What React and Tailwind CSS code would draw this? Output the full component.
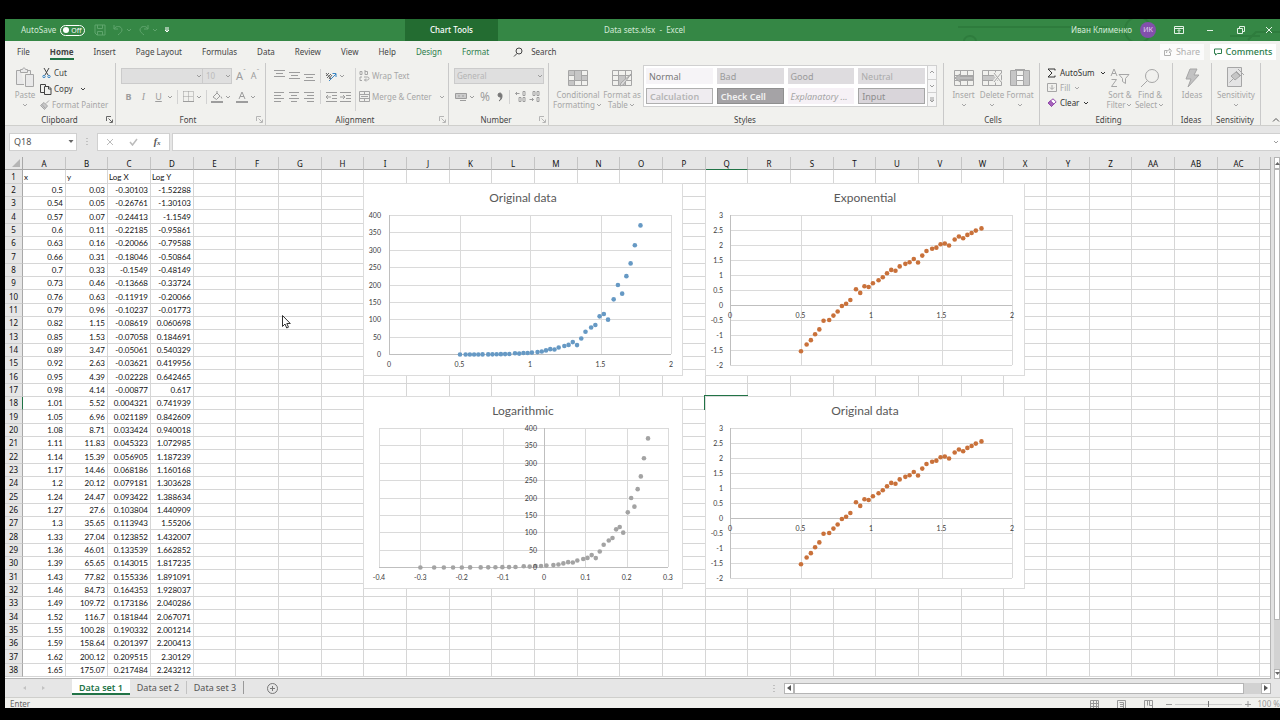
import React from 'react';

// Sheet data: x, y, log x, log y
const DATA = [
  ['0.5', '0.03', '-0.30103', '-1.52288'],
  ['0.54', '0.05', '-0.26761', '-1.30103'],
  ['0.57', '0.07', '-0.24413', '-1.1549'],
  ['0.6', '0.11', '-0.22185', '-0.95861'],
  ['0.63', '0.16', '-0.20066', '-0.79588'],
  ['0.66', '0.31', '-0.18046', '-0.50864'],
  ['0.7', '0.33', '-0.1549', '-0.48149'],
  ['0.73', '0.46', '-0.13668', '-0.33724'],
  ['0.76', '0.63', '-0.11919', '-0.20066'],
  ['0.79', '0.96', '-0.10237', '-0.01773'],
  ['0.82', '1.15', '-0.08619', '0.060698'],
  ['0.85', '1.53', '-0.07058', '0.184691'],
  ['0.89', '3.47', '-0.05061', '0.540329'],
  ['0.92', '2.63', '-0.03621', '0.419956'],
  ['0.95', '4.39', '-0.02228', '0.642465'],
  ['0.98', '4.14', '-0.00877', '0.617'],
  ['1.01', '5.52', '0.004321', '0.741939'],
  ['1.05', '6.96', '0.021189', '0.842609'],
  ['1.08', '8.71', '0.033424', '0.940018'],
  ['1.11', '11.83', '0.045323', '1.072985'],
  ['1.14', '15.39', '0.056905', '1.187239'],
  ['1.17', '14.46', '0.068186', '1.160168'],
  ['1.2', '20.12', '0.079181', '1.303628'],
  ['1.24', '24.47', '0.093422', '1.388634'],
  ['1.27', '27.6', '0.103804', '1.440909'],
  ['1.3', '35.65', '0.113943', '1.55206'],
  ['1.33', '27.04', '0.123852', '1.432007'],
  ['1.36', '46.01', '0.133539', '1.662852'],
  ['1.39', '65.65', '0.143015', '1.817235'],
  ['1.43', '77.82', '0.155336', '1.891091'],
  ['1.46', '84.73', '0.164353', '1.928037'],
  ['1.49', '109.72', '0.173186', '2.040286'],
  ['1.52', '116.7', '0.181844', '2.067071'],
  ['1.55', '100.28', '0.190332', '2.001214'],
  ['1.59', '158.64', '0.201397', '2.200413'],
  ['1.62', '200.12', '0.209515', '2.30129'],
  ['1.65', '175.07', '0.217484', '2.243212'],
  ['1.68', '225.4', '0.225309', '2.352954'],
  ['1.71', '262.1', '0.232996', '2.418467'],
  ['1.74', '314.2', '0.240549', '2.497206'],
  ['1.78', '371.5', '0.25042', '2.569959'],
];

const SHEET = [['x', 'y', 'Log X', 'Log Y'], ...DATA.slice(0, 37)];
const COLS = [...'ABCDEFGHIJKLMNOPQRSTUVWXYZ', 'AA', 'AB', 'AC'];

const series = (xi, yi) => DATA.map((r) => [Number(r[xi]), Number(r[yi])]);

const RAW = { x: [0, 2, 0.5], y: [0, 400, 50] };
const LOGY = { x: [0, 2, 0.5], y: [-2, 3, 0.5] };

const CHARTS = [
  { id: 'c1', place: 'left-[358px] top-[26px]', title: 'Original data', color: '#6699c4', points: series(0, 1), axes: RAW, box: [25, 31, 307, 170], labelX: 17, yAxis: 0 },
  { id: 'c2', place: 'left-[700px] top-[26px]', title: 'Exponential', color: '#c9713a', points: series(0, 3), axes: LOGY, box: [24, 31, 306, 181], labelX: 17, yAxis: 0 },
  { id: 'c3', place: 'left-[358px] top-[239px]', title: 'Logarithmic', color: '#a3a3a3', points: series(2, 1), axes: { x: [-0.4, 0.3, 0.1], y: [0, 400, 50] }, box: [15, 31, 304, 170], labelX: 173, yAxis: 0 },
  { id: 'c4', place: 'left-[700px] top-[239px]', title: 'Original data', color: '#c9713a', points: series(0, 3), axes: LOGY, box: [24, 31, 306, 181], labelX: 17, yAxis: 0 },
];

function ticks([min, max, step]) {
  const n = Math.round((max - min) / step);
  return Array.from({ length: n + 1 }, (_, i) => Number((min + i * step).toFixed(2)));
}

function Chart({ place, title, color, points, axes, box, labelX, yAxis }) {
  const [l, t, r, b] = box;
  const [x0, x1] = axes.x;
  const [y0, y1] = axes.y;
  const px = (v) => l + ((v - x0) / (x1 - x0)) * (r - l);
  const py = (v) => b - ((v - y0) / (y1 - y0)) * (b - t);
  const snap = (v) => Math.round(v) + 0.5;
  return (
    <figure className={`absolute ${place} m-0 border border-[#dcdcdc] bg-white font-['Lato','Open_Sans',sans-serif]`}>
      <svg width="318" height="191" className="block" role="img" aria-label={title}>
        <text x="159" y="18" fontSize="12" fill="#595959" textAnchor="middle">{title}</text>
        {ticks(axes.y).map((v) => (
          <line key={v} x1={l} x2={r} y1={snap(py(v))} y2={snap(py(v))} stroke={v === 0 ? '#bfbfbf' : '#dadada'} />
        ))}
        {ticks(axes.x).map((v) => (
          <line key={v} x1={snap(px(v))} x2={snap(px(v))} y1={t} y2={b} stroke={v === 0 ? '#bfbfbf' : '#dadada'} />
        ))}
        {points.map(([x, y]) => (
          <circle key={x} cx={px(x) + 0.5} cy={py(y) + 0.5} r="2.3" fill={color} />
        ))}
        {ticks(axes.y).map((v) => (
          <text key={v} x={labelX} y={py(v) + 3} fontSize="7" fill="#3a3a3a" textAnchor="end">{v}</text>
        ))}
        {ticks(axes.x).map((v) => (
          <text key={v} x={px(v)} y={py(yAxis) + 13} fontSize="7" fill="#3a3a3a" textAnchor="middle">{v}</text>
        ))}
      </svg>
    </figure>
  );
}

// Stroke icon drawn on its own w x h pixel box
function Icon({ w = 12, h = 12, children, className = '' }) {
  return (
    <svg width={w} height={h} viewBox={`0 0 ${w} ${h}`} fill="none" stroke="currentColor" className={`shrink-0 ${className}`} aria-hidden="true">
      {children}
    </svg>
  );
}

const Chevron = ({ className = '' }) => (
  <Icon w={8} h={6} className={className}><path d="M2 2l2 2 2-2" /></Icon>
);

const Sep = () => <span className="mx-[3px] h-[14px] w-px shrink-0 bg-[#d2d2d2]" />;

function Tool({ label, className = 'w-[14px]', children }) {
  return (
    <button type="button" aria-label={label} className={`flex shrink-0 items-center justify-center ${className}`}>
      {children}
    </button>
  );
}

const Drop = ({ label }) => <Tool label={label} className="w-2"><Chevron /></Tool>;

function BigTool({ icon, lines, drop = false, className = '' }) {
  return (
    <button type="button" className={`flex flex-col items-center text-[#a6a6a6] ${className}`}>
      <span className="flex h-[25px] items-center justify-center">{icon}</span>
      {lines.map((line, i) => (
        <span key={line} className="flex items-center whitespace-nowrap text-[8px] leading-[10px]">
          {line}
          {drop && i === 1 && <Chevron />}
        </span>
      ))}
      {drop && lines.length === 1 && <Chevron className="mt-[2px]" />}
    </button>
  );
}

const Launcher = ({ dim }) => (
  <Tool label="More options" className={`w-2 ${dim ? 'text-[#b5b5b5]' : 'text-[#666]'}`}>
    <Icon w={7} h={7}><path d="M.5 5V.5H5M2.5 2.5l3.500 3.500M6.500 3.500v3h-3" /></Icon>
  </Tool>
);

function Group({ name, launcher, dim, className = '', children }) {
  return (
    <section aria-label={name} className={`flex h-[62px] shrink-0 flex-col border-r border-[#c9c9c9] ${className}`}>
      <div className="flex h-[51px] shrink-0 pt-[2px]">{children}</div>
      <div className="flex h-[11px] shrink-0 items-center pr-[2px] text-[8px] leading-[11px] text-[#444]">
        <span className="flex-1 text-center">{name}</span>
        {launcher && <Launcher dim={dim} />}
      </div>
    </section>
  );
}

function TitleBar() {
  return (
    <header className="relative grid h-[22px] shrink-0 grid-cols-[1fr_auto_1fr] bg-[#358745] text-[8px] text-[#d4ead8]">
      <svg className="absolute right-0 top-0" width="330" height="22" fill="none" stroke="#2e7c3d" strokeWidth="2" aria-hidden="true">
        <path d="M8 8h150M14 22a6 5 0 0 1 12 0M280 17h30M298 21l8-8h24" />
        <circle cx="188" cy="11" r="13" />
      </svg>
      <div className="flex">
        <div className="flex w-[400px] items-center pl-4">
          <span id="autosave">AutoSave</span>
          <button type="button" role="switch" aria-checked="false" aria-labelledby="autosave" className="ml-1 flex h-[11px] w-[25px] items-center gap-[2px] rounded-full border border-white pl-[2px] text-[7px] leading-none text-white">
            <span className="size-[6px] shrink-0 rounded-full bg-white" />
            Off
          </button>
          <div className="ml-2 flex items-center gap-1 text-[#5fa56d]">
            <Tool label="Save">
              <Icon w={12} h={12}><path d="M1 1h10v10H3l-2-2zM3.500 1v3.500h5V1M3.500 11V7.500h5V11" /></Icon>
            </Tool>
            <div className="flex">
              <Tool label="Undo"><Icon><path d="M2 1v4h4M2 5c2-4 8-3 8 1 0 2-2 3-4 5" /></Icon></Tool>
              <Drop label="Undo list" />
            </div>
            <div className="flex">
              <Tool label="Redo"><Icon><path d="M10 1v4H6M10 5c-2-4-8-3-8 1 0 2 2 3 4 5" /></Icon></Tool>
              <Drop label="Redo list" />
            </div>
            <Tool label="Customize toolbar" className="w-2 text-white"><Icon w={6} h={6}><path d="M1 1h4M1 3l2 2 2-2z" /></Icon></Tool>
          </div>
        </div>
        <div className="flex w-[93px] items-center justify-center bg-[#236c31] font-medium text-white">Chart Tools</div>
      </div>
      <h1 className="self-center whitespace-pre pl-1">Data sets.xlsx  -  Excel</h1>
      <div className="relative flex items-center justify-end pr-[7px]">
        <span>Иван Клименко</span>
        <span className="ml-2 flex size-4 items-center justify-center rounded-full bg-[#8250ac] text-[7px] text-[#e6d9f2]">ИК</span>
        <div className="ml-4 flex gap-[17px] text-[#e3f2e6]">
          <Tool label="Ribbon display options"><Icon w={10} h={8}><path d="M.5.5h9v7h-9zM.5 2.500h9M5 7V4M3.500 5L5 3.500 6.500 5" /></Icon></Tool>
          <Tool label="Minimize"><Icon w={8} h={8}><path d="M1 4.500h6" /></Icon></Tool>
          <Tool label="Restore"><Icon w={8} h={8}><path d="M.5 2.500h5v5h-5zM2.500 2.500v-2h5v5h-2" /></Icon></Tool>
          <Tool label="Close" className="w-[8px]"><Icon w={8} h={8}><path d="M1 1l6 6M7 1L1 7" /></Icon></Tool>
        </div>
      </div>
    </header>
  );
}

const TABS = ['File', 'Home', 'Insert', 'Page Layout', 'Formulas', 'Data', 'Review', 'View', 'Help', 'Design', 'Format'];

function Tabs() {
  return (
    <nav className="flex h-[22px] shrink-0 items-center bg-[#f1f1ee] pl-3 text-[8px] text-[#444]">
      <div className="flex flex-1 items-center gap-5">
        {TABS.map((tab) => (
          <button
            key={tab}
            type="button"
            className={
              tab === 'Home'
                ? 'border-b-2 border-[#217346] pt-[2px] font-bold'
                : tab === 'Design' || tab === 'Format'
                  ? 'text-[#2d7d4c]'
                  : ''
            }
          >
            {tab}
          </button>
        ))}
        <label className="ml-1 flex items-center gap-2">
          <Icon w={10} h={10}><circle cx="6" cy="4" r="3" /><path d="M4 6.500L1 9.500" /></Icon>
          <input type="text" placeholder="Search" className="w-20 bg-transparent outline-none placeholder:text-[#444]" />
        </label>
      </div>
      <button type="button" className="flex h-4 w-11 items-center justify-center gap-1 bg-[#fbfbfb] text-[9px] text-[#b0b0b0]">
        <Icon w={8} h={8}><path d="M3 2.500H.5v5h6V5M2.500 5c0-2 1-3 3-3V.500L7.500 3 5.500 5V3.500" /></Icon>
        Share
      </button>
      <button type="button" className="ml-[6px] mr-1 flex h-4 w-[66px] items-center justify-center gap-1 bg-white text-[9px] font-medium text-[#2d7d4c]">
        <Icon w={8} h={8}><path d="M.5 1h7v4.500H3.500L1.500 7V5.500h-1z" /></Icon>
        Comments
      </button>
    </nav>
  );
}

const GALLERY = [
  ['Normal', 'bg-[#f6f4f7] text-[#777]'],
  ['Bad', 'bg-[#dedcdf] text-[#9a9a9a]'],
  ['Good', 'bg-[#dedcdf] text-[#9a9a9a]'],
  ['Neutral', 'bg-[#dedcdf] text-[#ababab]'],
  ['Calculation', 'border border-[#b0b0b0] bg-[#efecf0] font-semibold text-[#b5b5b5]'],
  ['Check Cell', 'border border-[#8f8f8f] bg-[#a5a3a6] font-semibold text-[#f1f1f1]'],
  ['Explanatory ...', 'bg-[#f6f1f6] italic text-[#a5a5a5]'],
  ['Input', 'border border-[#a5a5a5] bg-[#d9d5da] text-[#8d8d8d]'],
];

const Lines = ({ rows, y = 0 }) => (
  <Icon w={11} h={14}>
    {rows.map(([a, b], i) => <path key={i} d={`M${a} ${y + 1.5 + i * 3}H${b}`} />)}
  </Icon>
);

const TableGlyph = ({ children }) => (
  <Icon w={20} h={18}>
    <path d="M.5 1.500h19v15H.5zM.5 6.500h19M.5 11.500h19M6.500 1.500v15M13.500 1.500v15" />
    {children}
  </Icon>
);

function Ribbon() {
  return (
    <div className="flex h-[63px] shrink-0 border-b border-[#cfcfcc] bg-[#f1f1ee] text-[8px] text-[#9d9d9d]">
      <Group name="Clipboard" launcher className="w-[111px] pl-[9px]">
        <BigTool
          className="w-[22px]"
          lines={['Paste']}
          drop
          icon={<Icon w={20} h={21}><path d="M6 3.500H1.500v14H9M12 3.500h3.500V7M5.500 5.500v-3h2c0-2 3-2 3 0h2v3zM10.500 7.500h8v12h-8z" fill="#e9e9e9" /></Icon>}
        />
        <div className="ml-1 flex flex-col text-[#444]">
          <button type="button" className="flex h-4 items-center gap-[3px] pl-[2px]">
            <Icon w={9} h={10}><path d="M2 0l4 7M7 0L3 7" /><circle cx="2" cy="8.500" r="1.200" stroke="#3b86c4" /><circle cx="7" cy="8.500" r="1.200" stroke="#3b86c4" /></Icon>
            Cut
          </button>
          <button type="button" className="flex h-4 items-center gap-[2px]">
            <Icon w={12} h={11}><path d="M4 8.500H.5v-8h5V2M4.500 2.500H9l2 2v6H4.500zM8.500 2.500v2.500H11" /></Icon>
            Copy
            <Chevron className="ml-1" />
          </button>
          <button type="button" className="flex h-4 items-center gap-[2px] whitespace-nowrap text-[#a6a6a6]">
            <Icon w={10} h={10}><path d="M9 .5L6 3.500M4 2.500l3.500 3.500-3 3.500L.5 5.500zM2 4.500l3 3.500" fill="#c9c9c9" /></Icon>
            Format Painter
          </button>
        </div>
      </Group>

      <Group name="Font" launcher dim className="w-[150px] pl-[5px]">
        <div className="flex flex-col">
          <div className="flex h-[21px] items-center">
            <div className="relative">
              <select aria-label="Font" className="block h-4 w-[82px] appearance-none border border-[#cbcbcb] bg-[#dfdfdf]"><option> </option></select>
              <Chevron className="pointer-events-none absolute right-0 top-[5px]" />
            </div>
            <div className="relative">
              <select aria-label="Font size" defaultValue="10" className="block h-4 w-[29px] appearance-none border border-l-0 border-[#cbcbcb] bg-[#dfdfdf] pl-[3px] text-[#bbb]"><option>10</option></select>
              <Chevron className="pointer-events-none absolute right-0 top-[5px]" />
            </div>
            <Tool label="Increase font size" className="ml-[2px] w-[14px] text-[11px] leading-none">A<sup className="text-[7px]">ˆ</sup></Tool>
            <Tool label="Decrease font size" className="w-[14px] text-[9px] leading-none">A<sup className="text-[7px]">ˇ</sup></Tool>
          </div>
          <div className="flex h-[21px] items-center">
            <Tool label="Bold" className="w-[15px] text-[9px] font-bold">B</Tool>
            <Tool label="Italic" className="w-[15px] font-['Liberation_Serif',serif] text-[10px] italic">I</Tool>
            <Tool label="Underline" className="w-[15px] text-[9px] underline">U</Tool>
            <Drop label="Underline style" />
            <Sep />
            <Tool label="Borders"><Icon w={11} h={11}><path d="M0 10.500h11" /><path strokeDasharray="1 1" d="M.5.500h10v9M.5.500v9M5.500.500v9M.5 5.500h10" /></Icon></Tool>
            <Drop label="Border styles" />
            <Sep />
            <Tool label="Fill color"><Icon w={12} h={12}><path d="M2 6l4-4 3 3-3.500 3.500zM6 2V0M10 5.500l.8 2" /><path strokeWidth="2" d="M0 11h12" /></Icon></Tool>
            <Drop label="Fill colors" />
            <Tool label="Font color" className="ml-[3px] w-[14px]"><Icon w={12} h={12}><path d="M3 8L6 1l3 7M4 5.500h4" /><path strokeWidth="2" d="M0 11h12" /></Icon></Tool>
            <Drop label="Font colors" />
          </div>
        </div>
      </Group>

      <Group name="Alignment" launcher dim className="w-[183px] pl-[6px]">
        <div className="flex">
          <div className="flex flex-col">
            <div className="flex h-[21px] items-center">
              <Tool label="Top align" className="w-[15px]"><Lines rows={[[0, 11], [2, 9], [0, 11]]} /></Tool>
              <Tool label="Middle align" className="w-[15px]"><Lines y={2} rows={[[0, 11], [2, 9], [0, 11]]} /></Tool>
              <Tool label="Bottom align" className="w-[15px]"><Lines y={4} rows={[[0, 11], [2, 9], [0, 11]]} /></Tool>
              <Sep />
              <Tool label="Orientation"><Icon w={12} h={12}><path d="M1 6l3-3M2 8l4-4M4 9l3-4M1 3l5 6" stroke="#666" /><path stroke="#3b86c4" d="M4 11l7-7M7.500 3.500H11V7" /></Icon></Tool>
              <Drop label="Orientations" />
            </div>
            <div className="flex h-[21px] items-center">
              <Tool label="Align left" className="w-[15px]"><Lines y={1} rows={[[0, 10], [0, 7], [0, 10], [0, 7]]} /></Tool>
              <Tool label="Center" className="w-[15px]"><Lines y={1} rows={[[0, 10], [2, 8], [0, 10], [2, 8]]} /></Tool>
              <Tool label="Align right" className="w-[15px]"><Lines y={1} rows={[[0, 10], [3, 10], [0, 10], [3, 10]]} /></Tool>
              <Sep />
              <Tool label="Decrease indent"><Icon w={11} h={10}><path d="M0 .5h11M6 3.500h5M6 6.500h5M0 9.500h11M5 5H0M2 3L0 5l2 2" /></Icon></Tool>
              <Tool label="Increase indent"><Icon w={11} h={10}><path d="M0 .5h11M6 3.500h5M6 6.500h5M0 9.500h11M0 5h5M3 3l2 2-2 2" /></Icon></Tool>
            </div>
          </div>
          <span className="mx-[3px] my-[3px] w-px bg-[#d2d2d2]" />
          <div className="flex flex-col whitespace-nowrap text-[#a6a6a6]">
            <button type="button" className="flex h-[21px] items-center gap-[2px]">
              <Icon w={11} h={12}><path d="M1 1.500h2v3H1zM6 0v4.500h2.500v-3H6M3 7H1v3.500h2M5 7h3.500c2 0 2 3 0 3H5.500M7 8.500L5.500 10 7 11.500" /></Icon>
              Wrap Text
            </button>
            <button type="button" className="flex h-[21px] items-center gap-[2px]">
              <Icon w={11} h={11}><path d="M.5.500h10v10H.5zM.5 3.500h10M.5 7.500h10M5.500.500v3M5.500 7.500v3M2 5.500h7" /></Icon>
              Merge &amp; Center
              <Chevron className="ml-1" />
            </button>
          </div>
        </div>
      </Group>

      <Group name="Number" launcher dim className="w-[100px] pl-[5px]">
        <div className="flex flex-col">
          <div className="flex h-[21px] items-center">
            <div className="relative">
              <select aria-label="Number format" className="block h-4 w-[90px] appearance-none border border-[#cbcbcb] bg-[#dfdfdf] pl-[2px] text-[#b5b5b5]"><option>General</option></select>
              <Chevron className="pointer-events-none absolute right-0 top-[5px]" />
            </div>
          </div>
          <div className="flex h-[21px] items-center">
            <Tool label="Accounting format"><Icon w={12} h={10}><path d="M.5 1.500h11v5H.5zM3 4h2M7 4h2M5 8.500h6" fill="#ccc" /></Icon></Tool>
            <Drop label="Currencies" />
            <Tool label="Percent style" className="w-[18px] text-[12px] leading-none">%</Tool>
            <Tool label="Comma style" className="w-[12px] font-bold text-[#777]"><Icon w={6} h={10}><path fill="currentColor" d="M3 1a1.500 1.500 0 1 0 0 4h1c0 2-1 3-2 4 2-1 3-3 3-5S4 1 3 1z" /></Icon></Tool>
            <Sep />
            <Tool label="Increase decimal"><Icon w={11} h={11}><path d="M4.500 2.500H.5M2 1L.5 2.500 2 4M8 .500h2v4H8zM4 6.500h2v4H4zM8 6.500h2v4H8z" /></Icon></Tool>
            <Tool label="Decrease decimal"><Icon w={11} h={11}><path d="M.5 8.500h4M3 7l1.500 1.500L3 10M4 .500h2v4H4zM8 .500h2v4H8zM8 6.500h2v4H8z" /></Icon></Tool>
          </div>
        </div>
      </Group>

      <Group name="Styles" className="min-w-[300px] flex-1 pl-[6px] pr-[6px]">
        <BigTool className="w-[46px]" drop lines={['Conditional', 'Formatting']} icon={<TableGlyph><path fill="#c6c6c6" stroke="none" d="M1 2h5v4H1zM7 2h6v9H7zM1 12h5v4H1zM14 7h5v4h-5z" /></TableGlyph>} />
        <BigTool className="w-[42px]" drop lines={['Format as', 'Table']} icon={<TableGlyph><path fill="#c6c6c6" stroke="none" d="M7 7h6v9H7z" /><path d="M19 5L11 16l-3 1 1-3z" fill="#ddd" /></TableGlyph>} />
        <div className="flex h-[42px] min-w-0 flex-1 border border-[#d0d0d0] bg-white">
          <div className="grid flex-1 grid-cols-4 grid-rows-2 gap-1 p-[2px]">
            {GALLERY.map(([name, look]) => (
              <button key={name} type="button" className={`flex items-center overflow-hidden whitespace-nowrap px-[3px] text-left text-[9px] leading-none ${look}`}>
                {name}
              </button>
            ))}
          </div>
          <div className="flex w-[9px] flex-col divide-y divide-[#d0d0d0] border-l border-[#d0d0d0] bg-[#f6f6f6]">
            <Tool label="Previous styles" className="flex-1"><Chevron className="rotate-180" /></Tool>
            <Tool label="Next styles" className="flex-1"><Chevron /></Tool>
            <Tool label="All styles" className="flex-1"><Icon w={6} h={6}><path d="M1 1h4M1 3l2 2 2-2z" /></Icon></Tool>
          </div>
        </div>
      </Group>

      <Group name="Cells" className="w-[96px] pl-[5px]">
        <BigTool className="w-[29px]" drop lines={['Insert']} icon={<TableGlyph><path fill="#bbb" d="M1 9l5-4v2.500h13v3H6V13z" /></TableGlyph>} />
        <BigTool className="w-[28px]" drop lines={['Delete']} icon={<TableGlyph><path fill="#c6c6c6" stroke="none" d="M1 7h12v4H1z" /><path stroke="#f1f1ee" strokeWidth="3" d="M12 4l7 9M19 4l-7 9" /><path d="M12 4l7 9M19 4l-7 9" /></TableGlyph>} />
        <BigTool className="w-[28px]" drop lines={['Format']} icon={<TableGlyph><path fill="#c6c6c6" stroke="none" d="M1 2h5v14H1zM14 2h5v14h-5z" /><path d="M5 .5h10" /><path fill="#fff" d="M6.500 6.500h7v5h-7z" /></TableGlyph>} />
      </Group>

      <Group name="Editing" className="w-[133px] pl-[7px]">
        <div className="flex w-[58px] flex-col text-[#333]">
          <button type="button" className="flex h-[15px] items-center gap-1">
            <Icon w={9} h={10}><path d="M8 2.500V1H1l4 4-4 4h7V7.500" /></Icon>
            <span className="flex-1 text-left">AutoSum</span>
            <Chevron />
          </button>
          <button type="button" className="flex h-[15px] items-center gap-[3px] text-[#a6a6a6]">
            <Icon w={10} h={9}><path d="M.5.500h9v8h-9zM5 2v4M3 4.500L5 6.500l2-2" /></Icon>
            <span>Fill</span>
            <Chevron />
          </button>
          <button type="button" className="flex h-[15px] items-center gap-[3px]">
            <Icon w={10} h={9}><path d="M6 .8l3.200 3-4.700 4.500L1 5z" fill="#fff" stroke="#8f45a8" /><path d="M3.500 2.800l3.300 3.300-2.300 2.200L1 5z" fill="#a865bd" stroke="#8f45a8" /></Icon>
            <span>Clear</span>
            <Chevron />
          </button>
        </div>
        <BigTool
          className="w-[30px]"
          drop
          lines={['Sort &', 'Filter']}
          icon={<Icon w={20} h={20}><path d="M1 8l3-7 3 7M2 5.500h4M1.500 11.500h5l-5 7h5.500M9 6.500h10l-3.500 4v5l-3-2v-3z" /></Icon>}
        />
        <BigTool
          className="w-[30px]"
          drop
          lines={['Find &', 'Select']}
          icon={<Icon w={20} h={20}><circle cx="12" cy="8" r="6.500" /><path d="M7.500 12.500L1 19" /></Icon>}
        />
      </Group>

      <Group name="Ideas" className="w-[39px]">
        <BigTool className="w-full" lines={['Ideas']} icon={<Icon w={16} h={20}><path fill="#c2c2c2" d="M6 1h7l-3 6h5L4 19l3-8H2z" /></Icon>} />
      </Group>

      <Group name="Sensitivity" className="w-[49px]">
        <BigTool className="w-full" drop lines={['Sensitivity']} icon={<Icon w={20} h={21}><path d="M1.500.500h14v19h-14z" fill="#e4e4e4" /><path fill="#c6c6c6" d="M5 9l5-4 4 4-5 4zM3.500 15.500l4-4M12 2l6 6M10 4l6 6" /></Icon>} />
      </Group>

      <button type="button" aria-label="Collapse the ribbon" className="flex w-[19px] shrink-0 items-end justify-end pb-[2px] text-[#555]"><Icon w={8} h={6}><path d="M1 4.500l3-3 3 3" /></Icon></button>
    </div>
  );
}

function FormulaBar() {
  return (
    <div className="flex h-[31px] shrink-0 items-center bg-[#e6e6e6] pl-1 text-[#9d9d9d]">
      <div className="flex h-[18px] w-[68px] items-center border border-[#d0d0d0] bg-white pr-[2px]">
        <input type="text" aria-label="Name box" defaultValue="Q18" className="w-full min-w-0 bg-transparent pl-1 text-[9px] text-[#555] outline-none" />
        <Icon w={6} h={5}><path fill="#666" stroke="none" d="M.500 1h5L3 4z" /></Icon>
      </div>
      <Icon w={4} h={9} className="mx-2"><path strokeDasharray="1 2" d="M2 1v8" /></Icon>
      <div className="flex h-[18px] w-[73px] items-center justify-around border border-[#d0d0d0] bg-white">
        <Tool label="Cancel"><Icon w={8} h={8} className="text-[#bbb]"><path d="M1 1l6 6M7 1L1 7" /></Icon></Tool>
        <Tool label="Enter"><Icon w={9} h={8} className="text-[#bbb]"><path d="M1 4l2.500 3L8 1" strokeWidth="1.500" /></Icon></Tool>
        <Tool label="Insert function" className="w-[14px] font-['Liberation_Serif',serif] text-[10px] font-bold italic text-[#555]">f<sub className="text-[7px]">x</sub></Tool>
      </div>
      <div className="ml-[2px] flex h-[18px] flex-1 items-center border border-r-0 border-[#d0d0d0] bg-white">
        <input type="text" aria-label="Formula bar" className="w-full min-w-0 flex-1 bg-transparent px-1 text-[9px] outline-none" />
        <Chevron />
      </div>
    </div>
  );
}

function Grid() {
  return (
    <table className="w-full table-fixed border-separate border-spacing-0 font-['Lato','Open_Sans',sans-serif] text-[8px] leading-[10px] text-[#111]">
      <colgroup>
        <col className="w-[18px]" />
        {COLS.map((c, i) => <col key={c} className={i % 3 === 1 ? 'w-[42px]' : 'w-[43px]'} />)}
        <col />
      </colgroup>
      <thead>
        <tr className="h-[13px] bg-[#e6e6e6] font-['Noto_Sans',sans-serif]">
          <th className="border-b border-r border-[#a8a8a8] p-0">
            <svg width="8" height="8" className="ml-auto mr-[2px] block" aria-hidden="true"><path d="M8 0v8H0z" fill="#b5b5b5" /></svg>
          </th>
          {COLS.map((c) => (
            <th
              key={c}
              scope="col"
              className={`border-b border-r border-r-[#c4c4c4] p-0 pt-px font-normal ${c === 'Q' ? 'border-b-[#217346]' : 'border-b-[#a8a8a8]'}`}
            >
              {c}
            </th>
          ))}
          <th className="border-b border-[#a8a8a8] p-0" />
        </tr>
      </thead>
      <tbody>
        {SHEET.map((row, r) => (
          <tr key={r} className={r % 3 === 0 ? 'h-[14px]' : 'h-[13px]'}>
            <th scope="row" className={`border-b border-r border-b-[#cfcfcf] bg-[#e6e6e6] p-0 font-['Noto_Sans',sans-serif] font-normal ${r === 17 ? 'border-r-[#217346]' : 'border-r-[#a8a8a8]'}`}>
              {r + 1}
            </th>
            {COLS.map((c, i) => (
              <td key={c} className={`whitespace-nowrap border-b border-r border-[#d6d6d6] py-0 pl-px pr-[2px] ${r === 0 ? 'text-left' : 'text-right'}`}>
                {row[i]}
              </td>
            ))}
            <td className="border-b border-[#d6d6d6] p-0" />
          </tr>
        ))}
      </tbody>
    </table>
  );
}

function Sheet() {
  return (
    <div className="flex min-h-0 flex-1 bg-[#e1e1e1]">
      <main className="relative min-w-0 flex-1 overflow-hidden border-b border-r border-[#b5b5b5] bg-white">
        <Grid />
        {/* active cell Q18 */}
        <div className="absolute left-[699px] top-[238px] h-[15px] w-[44px] border-2 border-[#217346]" />
        {CHARTS.map(({ id, ...chart }) => <Chart key={id} {...chart} />)}
        <svg className="absolute left-[277px] top-[158px]" width="9" height="14" aria-hidden="true">
          <path d="M.5.500v11l2.500-2.500 1.700 4 1.800-.8-1.700-3.700H8.300z" fill="#fff" stroke="#333" />
        </svg>
      </main>
      <div className="ml-[3px] flex w-[6px] flex-col overflow-hidden bg-[#d2d2d2]">
        <button type="button" aria-label="Scroll up" className="flex h-[12px] items-center justify-center border border-[#b5b5b5] bg-white">
          <Icon w={5} h={4}><path fill="#666" stroke="none" d="M0 4h5L2.500 1z" /></Icon>
        </button>
        <div className="h-[451px] border border-[#b5b5b5] bg-white" />
        <button type="button" aria-label="Scroll down" className="mt-auto flex h-[10px] items-center justify-center border border-[#b5b5b5] bg-white">
          <Icon w={5} h={4}><path fill="#666" stroke="none" d="M0 0h5L2.500 3z" /></Icon>
        </button>
      </div>
    </div>
  );
}

function SheetTabs() {
  return (
    <div className="flex h-[19px] shrink-0 border-b border-[#cfcfcc] bg-[#e6e6e6] text-[9px] leading-[13px] text-[#555]">
      <div className="flex w-[67px] items-center gap-[10px] pl-4 text-[#c2c2c2]">
        <Tool label="Previous sheet" className="w-2"><Icon w={4} h={6}><path fill="currentColor" stroke="none" d="M3 1v4L0 3z" /></Icon></Tool>
        <Tool label="Next sheet" className="w-2"><Icon w={4} h={6}><path fill="currentColor" stroke="none" d="M1 1v4l3-2z" /></Icon></Tool>
      </div>
      <button type="button" className="h-4 w-[58px] shrink-0 whitespace-nowrap border-b-2 border-[#217346] bg-white pt-[2px] text-center font-semibold text-[#217346]">Data set 1</button>
      <button type="button" className="my-[2px] h-[13px] w-[57px] border-r border-[#c2c2c2]">Data set 2</button>
      <button type="button" className="my-[2px] h-[13px] w-[57px] border-r border-[#999]">Data set 3</button>
      <Tool label="New sheet" className="ml-5 w-4 text-[#777]"><Icon w={11} h={11}><circle cx="5.500" cy="5.500" r="5" /><path d="M3 5.500h5M5.500 3v5" /></Icon></Tool>
      <div className="ml-auto flex w-[508px] items-center pr-[9px]">
        <Icon w={4} h={9}><path stroke="#999" strokeDasharray="1 2" d="M2 1v8" /></Icon>
        <button type="button" aria-label="Scroll left" className="ml-2 flex h-[11px] w-[10px] items-center justify-center border border-[#b5b5b5] bg-white">
          <Icon w={4} h={6}><path fill="#555" stroke="none" d="M4 0v6L0 3z" /></Icon>
        </button>
        <div className="flex h-[11px] flex-1 bg-[#d2d2d2]">
          <div className="mr-[17px] flex-1 border border-[#b5b5b5] bg-white" />
        </div>
        <button type="button" aria-label="Scroll right" className="flex h-[11px] w-[10px] items-center justify-center border border-[#b5b5b5] bg-white">
          <Icon w={4} h={6}><path fill="#555" stroke="none" d="M0 0v6l4-3z" /></Icon>
        </button>
      </div>
    </div>
  );
}

function StatusBar() {
  return (
    <footer className="flex h-[10px] shrink-0 items-start justify-between overflow-hidden bg-[#f1f1ee] pl-[5px] text-[8px] leading-[12px] text-[#666]">
      <span>Enter</span>
      <div className="flex h-[12px] items-center text-[#999]">
        <div className="flex gap-4">
          <Tool label="Normal view" className="w-[11px]"><Icon w={9} h={9}><path d="M.500.500h8v8h-8zM.500 3.500h8M.500 6.500h8M3.500.500v8M6.500.500v8" /></Icon></Tool>
          <Tool label="Page layout view" className="w-[11px]"><Icon w={9} h={9}><path d="M.500.500h8v8h-8zM2.500 2.500h4v6M3 4.500h3M3 6.500h3" /></Icon></Tool>
          <Tool label="Page break view" className="w-[11px]"><Icon w={9} h={9}><path d="M.500 9V.500h8V9M3.500.500v5M5.500.500v5h3" /></Icon></Tool>
        </div>
        <Tool label="Zoom out" className="ml-[11px] w-2"><Icon w={6} h={6}><path d="M0 3.500h6" /></Icon></Tool>
        <span className="mx-[2px] flex h-px w-[67px] items-center justify-center bg-[#ccc]"><span className="h-[6px] w-px bg-[#777]" /></span>
        <Tool label="Zoom in" className="w-2"><Icon w={6} h={6}><path d="M0 3.500h6M3 0v6" /></Icon></Tool>
        <span className="ml-[6px] whitespace-nowrap">100 %</span>
      </div>
    </footer>
  );
}

export default function App() {
  return (
    <div className="h-screen bg-black pb-3 pl-[5px] pt-[19px]">
      <div className="flex h-full flex-col overflow-hidden font-['Noto_Sans','Open_Sans',sans-serif]">
        <TitleBar />
        <Tabs />
        <Ribbon />
        <FormulaBar />
        <Sheet />
        <SheetTabs />
        <StatusBar />
      </div>
    </div>
  );
}
